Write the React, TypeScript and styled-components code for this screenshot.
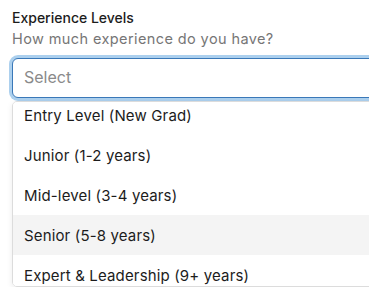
import { useEffect, useRef } from 'react';
import styled, { createGlobalStyle } from 'styled-components';

const options = [
    'Entry Level (New Grad)',
    'Junior (1-2 years)',
    'Mid-level (3-4 years)',
    'Senior (5-8 years)',
    'Expert & Leadership (9+ years)',
];

const HIGHLIGHTED = 3;

const App = () => {
    const menuRef = useRef<HTMLUListElement>(null);

    useEffect(() => {
        if (menuRef.current) {
            menuRef.current.scrollTop = 11;
        }
    }, []);

    return (
        <>
            <GlobalStyle />
            <Field>
                <Label>Experience Levels</Label>
                <Hint>How much experience do you have?</Hint>
                <SelectBox>
                    <Placeholder>Select</Placeholder>
                </SelectBox>
                <Menu ref={menuRef}>
                    {options.map((option, i) => (
                        <Option key={option} $active={i === HIGHLIGHTED}>
                            {option}
                        </Option>
                    ))}
                </Menu>
            </Field>
        </>
    );
};

export default App;

const GlobalStyle = createGlobalStyle`
html, body {
    margin: 0;
    padding: 0;
    background: #fff;
    overflow: hidden;
}

body {
    font-family: Inter, "Noto Sans", sans-serif;
    color: #1c1c1c;
}
`;

const Field = styled.div`
width: 420px;
padding: 8px 0 0 12px;
display: flex;
flex-direction: column;
`;

const Label = styled.div`
font-size: 14px;
line-height: 20px;
font-weight: 500;
color: #1c1c1c;
`;

const Hint = styled.div`
margin-top: 1px;
font-size: 14.5px;
line-height: 20px;
letter-spacing: 0.4px;
color: #767676;
`;

const SelectBox = styled.div`
margin-top: 9px;
box-sizing: border-box;
height: 40px;
display: flex;
align-items: center;
padding: 0 11px;
border: 1px solid #3a78b8;
border-radius: 6px;
box-shadow: 0 0 0 3px #acd0ee;
background: #fff;
`;

const Placeholder = styled.span`
font-size: 16px;
line-height: 20px;
margin-top: -2px;
color: #8a8a8a;
`;

const Menu = styled.ul`
margin: 3px 0 0;
padding: 4px 0 0;
list-style: none;
box-sizing: border-box;
height: 186px;
overflow-y: auto;
scrollbar-width: none;
border: 1px solid #dcdcdc;
border-radius: 5px;
box-shadow: 0 2px 6px rgba(0, 0, 0, 0.08);
background: #fff;
`;

const Option = styled.li<{ $active: boolean }>`
height: 40px;
display: flex;
align-items: center;
padding: 0 11px;
font-size: 15px;
letter-spacing: 0.15px;
color: #1c1c1c;
background: ${p => (p.$active ? '#f4f4f4' : '#fff')};
`;
